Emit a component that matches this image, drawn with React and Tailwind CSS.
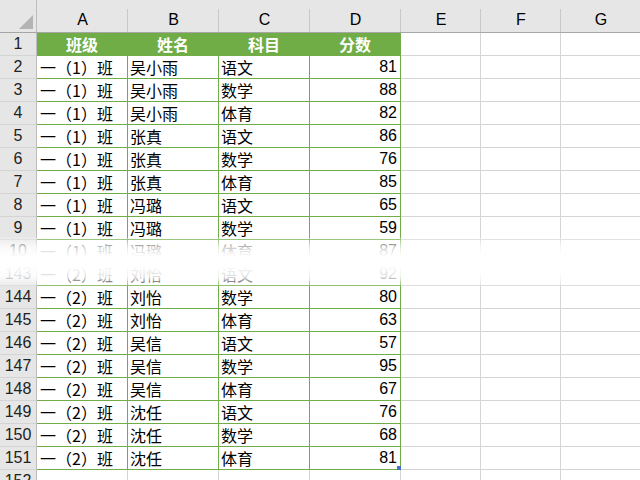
import React from "react";

const cols = [
  { key: "A", w: "w-[91px]" },
  { key: "B", w: "w-[91px]" },
  { key: "C", w: "w-[91px]" },
  { key: "D", w: "w-[91px]" },
  { key: "E", w: "w-[80px]" },
  { key: "F", w: "w-[80px]" },
  { key: "G", w: "w-[80px]" },
];

const rows = [
  [2, "一（1）班", "吴小雨", "语文", 81],
  [3, "一（1）班", "吴小雨", "数学", 88],
  [4, "一（1）班", "吴小雨", "体育", 82],
  [5, "一（1）班", "张真", "语文", 86],
  [6, "一（1）班", "张真", "数学", 76],
  [7, "一（1）班", "张真", "体育", 85],
  [8, "一（1）班", "冯璐", "语文", 65],
  [9, "一（1）班", "冯璐", "数学", 59],
  [10, "一（1）班", "冯璐", "体育", 87],
  [143, "一（2）班", "刘怡", "语文", 92],
  [144, "一（2）班", "刘怡", "数学", 80],
  [145, "一（2）班", "刘怡", "体育", 63],
  [146, "一（2）班", "吴信", "语文", 57],
  [147, "一（2）班", "吴信", "数学", 95],
  [148, "一（2）班", "吴信", "体育", 67],
  [149, "一（2）班", "沈任", "语文", 76],
  [150, "一（2）班", "沈任", "数学", 68],
  [151, "一（2）班", "沈任", "体育", 81],
];

const cjk = { fontFamily: '"Noto Sans CJK SC", "Liberation Sans", sans-serif' };
const latin = { fontFamily: '"Liberation Sans", Arial, sans-serif' };

const RowNum = ({ n }) => (
  <div
    className="w-[37px] shrink-0 h-[23px] bg-[#e6e6e6] border-r border-b border-r-[#bdbdbd] border-b-[#d4d4d4] flex items-center justify-center text-[16px] text-[#222]"
    style={latin}
  >
    {n}
  </div>
);

const GreenCell = ({ w, children, className = "" }) => (
  <div className={`${w} shrink-0 h-[23px] border-r border-b border-[#70ad47] flex items-center text-[16px] leading-[22px] text-black ${className}`}>
    {children}
  </div>
);

const GrayCell = ({ w }) => <div className={`${w} shrink-0 h-[23px] border-r border-b border-[#d4d4d4] bg-white`} />;

export default function App() {
  return (
    <div className="relative w-[640px] h-[480px] overflow-hidden bg-white select-none">
      {/* column headers */}
      <div className="flex h-[33px] bg-[#e6e6e6] border-b border-[#a6a6a6]">
        <div className="relative w-[37px] shrink-0 border-r border-[#bdbdbd]">
          <svg className="absolute right-[3px] bottom-[3px]" width="14" height="14" viewBox="0 0 14 14">
            <polygon points="14,0 14,14 0,14" fill="#b4b4b4" />
          </svg>
        </div>
        {cols.map((c) => (
          <div key={c.key} className={`relative ${c.w} shrink-0 flex items-center justify-center pt-[8px] text-[16px] text-black`} style={latin}>
            {c.key}
            <span className="absolute right-0 top-[9px] bottom-0 w-px bg-[#c8c8c8]" />
          </div>
        ))}
      </div>

      {/* row 1 header */}
      <div className="flex">
        <RowNum n={1} />
        {["班级", "姓名", "科目", "分数"].map((t) => (
          <div
            key={t}
            className="w-[91px] shrink-0 h-[23px] bg-[#70ad47] border-r border-b border-[#70ad47] flex items-center justify-center text-[16px] font-bold text-white leading-[22px]"
            style={cjk}
          >
            {t}
          </div>
        ))}
        {cols.slice(4).map((c) => (
          <GrayCell key={c.key} w={c.w} />
        ))}
      </div>

      {rows.map(([n, cls, name, subj, score], i) => (
        <div key={n} className="flex">
          <RowNum n={n} />
          <GreenCell w="w-[91px]" className="pl-[3px]">
            <span style={cjk}>{cls}</span>
          </GreenCell>
          <GreenCell w="w-[91px]" className="pl-[2px]">
            <span style={cjk}>{name}</span>
          </GreenCell>
          <GreenCell w="w-[91px]" className="pl-[2px]">
            <span style={cjk}>{subj}</span>
          </GreenCell>
          <GreenCell w="w-[91px]" className="relative justify-end pr-[3px]">
            <span style={latin}>{score}</span>
            {i === rows.length - 1 && <span className="absolute right-[-1px] bottom-[-1px] w-[4px] h-[4px] bg-[#4472c4]" />}
          </GreenCell>
          {cols.slice(4).map((c) => (
            <GrayCell key={c.key} w={c.w} />
          ))}
        </div>
      ))}

      <div className="flex">
        <RowNum n={152} />
        {cols.map((c) => (
          <GrayCell key={c.key} w={c.w} />
        ))}
      </div>

      {/* torn/fade gap between row 10 and row 143 */}
      <div className="absolute left-0 right-0 top-[237px] h-[49px] bg-[linear-gradient(to_bottom,rgba(255,255,255,0.15)_0%,rgba(255,255,255,0.8)_22%,#fff_40%,#fff_58%,rgba(255,255,255,0.85)_82%,rgba(255,255,255,0.2)_100%)]" />
    </div>
  );
}
